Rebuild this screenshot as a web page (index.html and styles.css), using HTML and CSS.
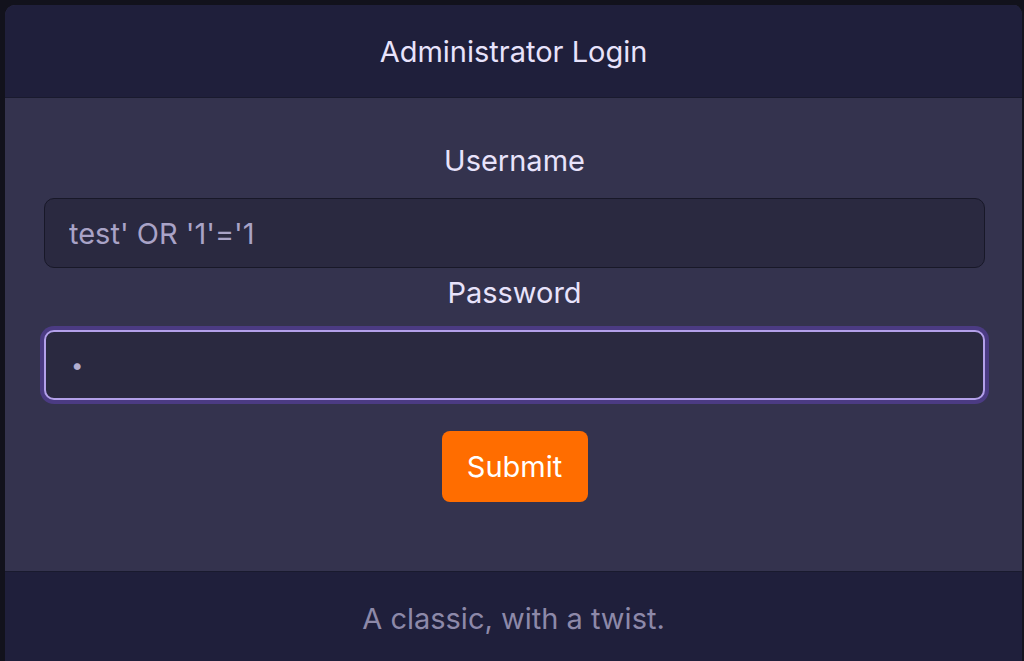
FILE: index.html
```html
<!DOCTYPE html>
<html lang="en">
<head>
<meta charset="utf-8">
<title>Administrator Login</title>
<link rel="stylesheet" href="styles.css">
</head>
<body>
  <div class="card">
    <header class="card-header">Administrator Login</header>
    <main class="card-body">
      <form class="login-form" onsubmit="return false">
        <label class="field-label" for="username">Username</label>
        <input class="field-input" id="username" type="text" value="test' OR '1'='1">
        <label class="field-label" for="password">Password</label>
        <input class="field-input field-focus" id="password" type="password" value="x">
        <button class="submit-btn" type="submit">Submit</button>
      </form>
    </main>
    <footer class="card-footer">A classic, with a twist.</footer>
  </div>
</body>
</html>
```

FILE: styles.css
```css
* { box-sizing: border-box; }

html, body {
  margin: 0;
  height: 100%;
  overflow: hidden;
}

body {
  background: #12121c;
  font-family: Inter, "Noto Sans", "DejaVu Sans", sans-serif;
  padding: 5px 0 0 5px;
}

.card {
  background: #34334e;
  border-radius: 10px 10px 0 0;
  border-right: 2px solid #14141f;
  overflow: hidden;
  display: flex;
  flex-direction: column;
  min-height: 700px;
}

.card-header {
  background: #1f1f3b;
  height: 93px;
  border-bottom: 1px solid #191a2e;
  display: flex;
  align-items: center;
  justify-content: center;
  color: #e8e3fb;
  font-size: 29px;
  padding-top: 1px;
}

.card-body {
  padding: 47px 37px 69px 39px;
  border-bottom: 1px solid #191a2e;
}

.login-form {
  display: flex;
  flex-direction: column;
  align-items: stretch;
}

.field-label {
  display: block;
  text-align: center;
  color: #e8e3fb;
  font-size: 29px;
  line-height: 31px;
  margin-bottom: 22px;
}

.field-input {
  display: block;
  width: 100%;
  height: 70px;
  background: #2a2940;
  border: 1px solid #181828;
  border-radius: 10px;
  color: #a9a3c7;
  font-family: inherit;
  font-size: 29px;
  padding: 0 24px;
  outline: none;
  margin-bottom: 9px;
}

.field-focus {
  border: 2px solid #b3a0ea;
  box-shadow: 0 0 0 4px #4b3b83;
  font-size: 22px;
  padding: 0 25px;
  color: #b3aed0;
  margin-bottom: 31px;
}

.submit-btn {
  align-self: center;
  width: 146px;
  height: 71px;
  background: #ff6d00;
  color: #ffffff;
  border: none;
  border-radius: 8px;
  font-family: inherit;
  font-size: 29px;
  cursor: pointer;
}

.card-footer {
  background: #1f1f3b;
  flex: 1;
  text-align: center;
  color: #8d89a9;
  font-size: 29px;
  padding-top: 29px;
}
```
